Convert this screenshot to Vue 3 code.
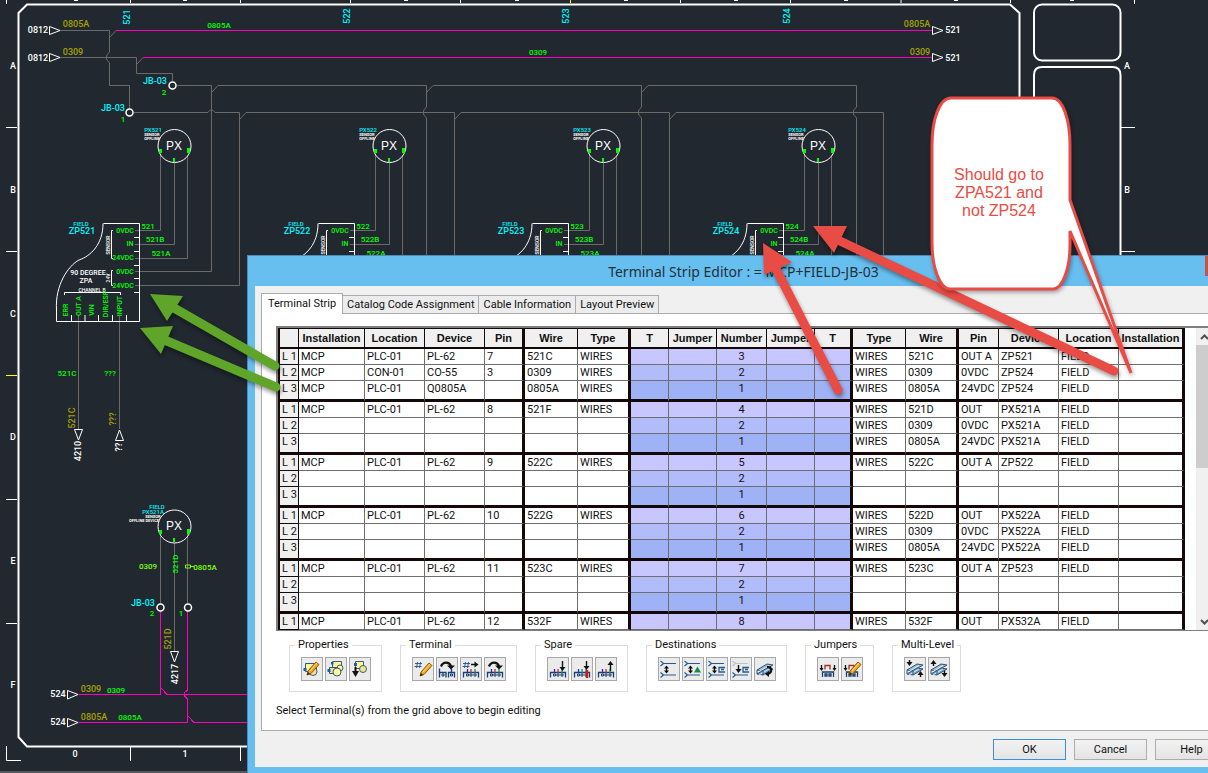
<script setup>
import { ref } from 'vue'

const tabs = ['Terminal Strip', 'Catalog Code Assignment', 'Cable Information', 'Layout Preview']
const activeTab = ref(tabs[0])

const columns = [
  { label: '', width: 19 },
  { label: 'Installation', width: 66 },
  { label: 'Location', width: 60 },
  { label: 'Device', width: 60 },
  { label: 'Pin', width: 40, thick: true },
  { label: 'Wire', width: 53 },
  { label: 'Type', width: 53, thick: true },
  { label: 'T', width: 38, mid: true },
  { label: 'Jumper', width: 48, mid: true },
  { label: 'Number', width: 50, mid: true },
  { label: 'Jumper', width: 48, mid: true },
  { label: 'T', width: 38, mid: true, thick: true },
  { label: 'Type', width: 53 },
  { label: 'Wire', width: 53, thick: true },
  { label: 'Pin', width: 40 },
  { label: 'Device', width: 60 },
  { label: 'Location', width: 60 },
  { label: 'Installation', width: 66, thick: true },
]

const none = ['', '', '', '', '', '']
const row = (level, left, number, right) => ({
  level,
  cells: ['L ' + level, ...left, '', '', number, '', '', ...right],
})
const plc = (pin, wire) => ['MCP', 'PLC-01', 'PL-62', pin, wire, 'WIRES']
const dest = (wire, pin, device) => ['WIRES', wire, pin, device, 'FIELD', '']

const rows = [
  row(1, plc('7', '521C'), '3', dest('521C', 'OUT A', 'ZP521')),
  row(2, ['MCP', 'CON-01', 'CO-55', '3', '0309', 'WIRES'], '2', dest('0309', '0VDC', 'ZP524')),
  row(3, ['MCP', 'PLC-01', 'Q0805A', '', '0805A', 'WIRES'], '1', dest('0805A', '24VDC', 'ZP524')),
  row(1, plc('8', '521F'), '4', dest('521D', 'OUT', 'PX521A')),
  row(2, none, '2', dest('0309', '0VDC', 'PX521A')),
  row(3, none, '1', dest('0805A', '24VDC', 'PX521A')),
  row(1, plc('9', '522C'), '5', dest('522C', 'OUT A', 'ZP522')),
  row(2, none, '2', none),
  row(3, none, '1', none),
  row(1, plc('10', '522G'), '6', dest('522D', 'OUT', 'PX522A')),
  row(2, none, '2', dest('0309', '0VDC', 'PX522A')),
  row(3, none, '1', dest('0805A', '24VDC', 'PX522A')),
  row(1, plc('11', '523C'), '7', dest('523C', 'OUT A', 'ZP523')),
  row(2, none, '2', none),
  row(3, none, '1', none),
  row(1, plc('12', '532F'), '8', dest('532F', 'OUT', 'PX532A')),
]

const NAVY = '#17406d'
const s = (d, stroke = NAVY, width = 1) => ({ d, stroke, width, fill: 'none' })
const f = (d, fill, stroke = 'none') => ({ d, stroke, width: 1, fill })
const circle = (x, y, r) => `M${x - r},${y}a${r},${r} 0 1 0 ${2 * r},0a${r},${r} 0 1 0 ${-2 * r},0z`
const pencil = (x, y) => [
  f(`M${x},${y}l1,-4 8,-9 3,2.500 -8,9z`, '#f5a623', '#8a5a10'),
  s(`M${x + 3},${y - 4}l7,-8`, '#ffe27a', 1),
  f(`M${x},${y}l1,-3 2,2z`, '#222'),
]
const hash = () => [s('M5.500,5l-1,6M8.500,5l-1,6M3,6.500h7M2.500,9.500h7', '#35618f')]
const comb = (middle) => [
  s('M3.500,20.500v-5h15v5', NAVY, 1.3),
  s('M7.500,12v4', '#1030d0', 1.3),
  s('M11,12v4', middle, 1.3),
  s('M15,12v4', '#1c8a5a', 1.3),
  s('M6.500,17h2v2h-2zM10,17h2v2h-2zM14,17h2v2h-2z'),
]
const RED = '#e02020'
const GREEN = '#1c8a5a'
const splitComb = () => [
  s('M3.500,20.500v-5h6.500v5M12.500,20.500v-5h6v5', NAVY, 1.3),
  s('M3.500,11.500v4', '#1030d0', 1.3),
  s('M15.500,12v4', '#1030d0', 1.3),
  s('M6,17h2v2h-2zM14.500,17h2v2h-2z'),
]
const curve = () => [s('M5,9.500C7,4.500 13,4.500 15,9', '#111', 2.2), f('M11,8.500h8l-4,4z', '#111')]
const down = (x, y1, y2) => [s(`M${x},${y1}V${y2 - 2}`, '#111', 1.4), f(`M${x - 3},${y2 - 4}h6l-3,4z`, '#111')]
const up = (x, y1, y2) => [s(`M${x},${y1 + 2}V${y2}`, '#111', 1.4), f(`M${x - 3},${y1 + 4}h6l-3,-4z`, '#111')]
const fork = (y, color = '#235a94') => [s(`M2.500,${y - 2.5}l3,2.500h12.500M2.500,${y + 2.5}l3,-2.500`, color, 1.2)]
const updown = () => [s('M8.500,10v5', '#111', 1.4), f('M6,11.500h5l-2.500,-3zM6,13.500h5l-2.500,3z', '#111')]
const plug = () => [s('M19,10.500h-6v4.500h6M15,12.500h3', '#235a94', 1.3)]
const rail = () => [
  f('M3,13l10,-6 6,1 -10,6z', '#9dbbd6', '#2d5578'),
  f('M3,17l10,-6 6,1 -10,6z', '#7fa3c4', '#2d5578'),
  s('M5,14.500l10,-6M5,18l10,-6', '#dce9f4'),
  s('M9,14v4M3,13v4', '#2d5578'),
]
const jumper = () => [s('M8,12.500v-4h5v4', '#b02a2a', 1.3)]
const block = () => [s('M5.500,20v-5h11v5M8,17h2v2h-2zM12,17h2v2h-2z', NAVY, 1.3)]

const groups = [
  {
    name: 'Properties',
    tools: [
      { name: 'Edit Properties', shapes: [f('M4.500,6.500h11v8h-11z', '#fff3a0', '#235a94'), f(circle(12, 14.5, 4), '#ece39a', '#3b6170'), f('M2.500,11h3v3h-3z', '#1c5fa8'), ...pencil(6, 18)] },
      { name: 'Copy Properties', shapes: [f('M7.500,4.500h9v6h-9z', '#fff3a0', '#3b6170'), f(circle(15, 11, 3), '#fff3a0', '#3b6170'), f('M4.500,10.500h8v6h-8z', '#ece39a', '#235a94'), f(circle(12, 15, 4), '#fff3a0', '#3b6170'), f('M2.500,12h3v3h-3zM6,5h2.500v2.500h-2.500z', '#1c5fa8')] },
      { name: 'Paste Properties', shapes: [f('M6.500,4.500h8v7h-8z', '#fff3a0', '#3b6170'), f(circle(14, 12, 3.5), '#ece39a', '#3b6170'), f('M5,6h3v3h-3z', '#1c5fa8'), s('M6.500,10v6', '#111', 2), f('M3,14h7l-3.500,6z', '#111')] },
    ],
  },
  {
    name: 'Terminal',
    tools: [
      { name: 'Edit Terminal', shapes: [...hash(), ...pencil(8, 19)] },
      { name: 'Reassign Terminal', shapes: [...curve(), ...splitComb()] },
      { name: 'Renumber Terminal', shapes: [...hash(), s('M11,7.500h5', '#111', 1.5), f('M14.500,4.500v6l4,-3z', '#111'), ...comb(RED)] },
      { name: 'Move Terminal', shapes: [...curve(), ...comb(RED)] },
    ],
  },
  {
    name: 'Spare',
    tools: [
      { name: 'Insert Spare Terminal', shapes: [...comb(RED), ...down(15.5, 4, 14)] },
      { name: 'Insert Accessory', shapes: [...comb(GREEN), ...down(15.5, 4, 13), s('M16,13v8', '#e81010', 2.4)] },
      { name: 'Delete Spare', shapes: [...comb(RED), ...up(15.5, 4, 14)] },
    ],
  },
  {
    name: 'Destinations',
    tools: [
      { name: 'Toggle Location', shapes: [...fork(6.5), ...fork(18), ...updown()] },
      { name: 'Toggle Installation', shapes: [...fork(6.5), ...fork(18), ...updown(), f('M12,15.500h7l-3.500,-6z', '#168a4c')] },
      { name: 'Switch Destination', shapes: [...fork(6.5), ...fork(18), ...updown(), ...plug()] },
      { name: 'Move Destination', shapes: [...fork(6.5, '#b9c4cc'), ...fork(18), ...down(8.5, 8, 16), ...plug()] },
      { name: 'Rotate Destination', shapes: [...rail(), s('M13,10c5,-1 6,5 1,7', '#111', 2), f('M15,14v6l-4,-3z', '#111')] },
    ],
  },
  {
    name: 'Jumpers',
    tools: [
      { name: 'Add Jumper', shapes: [...jumper(), s('M4.500,8v5M17.500,8v5', '#111', 1.3), f('M2.500,11h4l-2,3zM15.500,11h4l-2,3z', '#111'), ...block()] },
      { name: 'Edit Jumper', shapes: [...jumper(), s('M4.500,8v4', '#111', 1.3), f('M2.500,11h4l-2,3z', '#111'), ...block(), ...pencil(8, 18)] },
    ],
  },
  {
    name: 'Multi-Level',
    tools: [
      { name: 'Associate Terminals', shapes: [...rail(), ...down(5.5, 3, 9), ...up(16.5, 14, 20)] },
      { name: 'Break Apart', shapes: [...rail(), ...up(5.5, 3, 9), ...down(16.5, 14, 20)] },
    ],
  },
]

const sensors = [
  { x: 174, no: '521' },
  { x: 389, no: '522' },
  { x: 603, no: '523' },
  { x: 818, no: '524' },
]

const t = (text, x, y, cls, size = 9) => ({ text, x, y, cls, size })
const labels = [
  t('0812', 38, 30, 'white'), t('0812', 38, 58, 'white'),
  t('0805A', 76, 24, 'olive'), t('0309', 73, 52, 'olive'),
  t('0805A', 219, 25, 'green', 8), t('0309', 538, 52, 'green', 8),
  t('0805A', 917, 24, 'olive'), t('0309', 920, 52, 'olive'),
  t('521', 953, 30, 'white'), t('521', 953, 58, 'white'),
  t('JB-03', 155, 81, 'cyan'), t('2', 164, 92, 'green', 8),
  t('JB-03', 113, 108, 'cyan'), t('1', 123, 119, 'green', 8),
  t('90 DEGREE', 88, 273, 'white', 7), t('ZPA', 86, 281, 'white', 7), t('CHANNEL B', 92, 290, 'white', 5),
  t('0VDC', 125, 272, 'green', 7), t('24VDC', 123, 286, 'green', 7),
  t('521C', 67, 373, 'green', 8), t('???', 110, 373, 'green', 8),
  t('FIELD', 157, 506, 'cyan', 6), t('PX521A', 153, 511, 'cyan', 6),
  t('0309', 148, 566, 'lime', 8), t('0805A', 205, 567, 'lime', 8),
  t('JB-03', 143, 603, 'cyan'), t('2', 152, 613, 'green', 8), t('1', 181, 613, 'green', 8),
  t('524', 58, 694, 'white'), t('524', 58, 722, 'white'),
  t('0309', 91, 689, 'olive'), t('0309', 116, 690, 'green', 8),
  t('0805A', 94, 717, 'olive'), t('0805A', 130, 717, 'green', 8),
  t('A', 13, 66, 'white'), t('B', 13, 190, 'white'), t('C', 13, 314, 'white'),
  t('D', 13, 437, 'white'), t('E', 13, 561, 'white'), t('F', 13, 685, 'white'),
  t('0', 75, 754, 'white'), t('1', 185, 754, 'white'),
  t('A', 1127, 66, 'white'), t('B', 1127, 190, 'white'),
]
const uprights = [
  t('521', 127, 17, 'cyan'), t('522', 347, 16, 'cyan'), t('523', 566, 16, 'cyan'), t('524', 787, 16, 'cyan'),
  t('ERR', 66, 310, 'green', 7), t('OUT A', 79, 306, 'green', 7), t('VIN', 92, 310, 'green', 7),
  t('DIR/ESP', 106, 304, 'green', 7), t('INPUT', 120, 306, 'green', 7),
  t('24V', 108, 278, 'white', 5),
  t('521C', 72, 418, 'olive'), t('???', 113, 419, 'olive'),
  t('4210', 78, 451, 'white'), t('??', 119, 447, 'white'),
  t('521D', 175, 564, 'green', 8), t('521D', 168, 639, 'olive'), t('4217', 175, 674, 'white'),
]
const topMarks = [74, 183, 404, 515, 624, 734, 844, 954, 1070]
</script>

<template>
  <main class="desktop">
    <svg class="drawing" width="1208" height="773" viewBox="0 0 1208 773" aria-label="Wiring schematic">
      <g class="frame">
        <path d="M1019.500 256V13L1010 4.500H27L18.500 13V737L27 746.500H260" />
        <rect x="1034" y="4.500" width="86.500" height="56" rx="8" />
        <path d="M1034 256V75q0-8 8-8H1112.500q8 0 8 8V256" />
      </g>
      <path class="tick" d="M6.500 0V4M130.500 0V3M240.500 0V3M350.500 0V3M460.500 0V3M680.500 0V3M790.500 0V3M901 0V3M1010.500 0V3M1134.500 0V4M6 127.500H17M6 251.500H17M6 499.500H17M6 623.500H17M130.500 747V761M240.500 747V761M6.500 746V760.500H21M1121 127.500H1135M1121 251.500H1135" />
      <path class="tick yellow" d="M570.500 0V3M6 375.500H17" />
      <rect v-for="x in topMarks" :key="x" :x="x" y="0" width="4" height="1" fill="#fff" />

      <path class="wire" d="M60 30.500H109.500V52Q103 57.500 109.500 63V85.500H129.500V108M110 37L116 30.500M60 57.500H136.500V73.500H172.500V81M137 64L143 57.500M177 85.500H211.500V271.500H135M212 92L218 85.500H426.500V107Q420 112.500 426.500 118V256M427 92L433 85.500H641.500V107Q635 112.500 641.500 118V256M642 92L648 85.500H856.500V107Q850 112.500 856.500 118V256M134 112.500H208Q211.500 107 215 112.500H239.500V285.500H135M240 119L246 112.500H454.500V256M455 119L461 112.500H669.500V256M670 119L676 112.500H883.500V256" />
      <path class="wire" d="M78.500 315V429M119.500 315V429M160.500 532V603M174.500 543V652M187.500 532V603" />
      <path class="feed" d="M116 30.500H932" />
      <path class="feed" d="M143 57.500H932" />
      <path class="feed" d="M78 694.500H160.500V611M161 688L167 694.500H248" />
      <path class="feed" d="M78 722.500H187.500V699Q181 694.500 187.500 690V611M188 716L194 722.500H248" />

      <g v-for="p in sensors" :key="p.no" :transform="`translate(${p.x - 174} 0)`">
        <path class="wire" d="M160.500 155V230.500H135M174.500 163V244.500H135M187.500 155V258.500H135" />
        <circle class="part" cx="174.500" cy="146" r="16.500" />
        <text class="plain" x="174" y="146" font-size="12">PX</text>
        <path class="pin" d="M159 149h3v4h-3zM173 158h2v4h-2zM187 148h3v5h-3z" />
        <text class="cyan" x="153" y="129" font-size="6">PX{{ p.no }}</text>
        <text class="tiny" x="152" y="134">SENSOR</text>
        <text class="tiny" x="152" y="138">OFFLINE</text>
        <path class="part" d="M103.500 223.500H139.500V321.500H56.500V310C55 285 68 266 79 260C91 256 103 244 103 223.500M134 237.500H139M134 251.500H139M134 265.500H139M134 278.500H139M134 292.500H139M113 230.500H111.500V258.500H113" />
        <text class="cyan" x="81" y="223" font-size="6">FIELD</text>
        <text class="cyan" x="82" y="231" font-size="9">ZP{{ p.no }}</text>
        <text class="green" x="125" y="231" font-size="7">0VDC</text>
        <text class="green" x="130" y="244" font-size="7">IN</text>
        <text class="green" x="123" y="258" font-size="7">24VDC</text>
        <text class="green" x="148" y="226" font-size="8">{{ p.no }}</text>
        <text class="green" x="155" y="239" font-size="8">{{ p.no }}B</text>
        <text class="green" x="161" y="253" font-size="8">{{ p.no }}A</text>
        <text class="white" transform="translate(108 245) rotate(-90)" font-size="5">SENSOR</text>
      </g>

      <circle class="part" cx="174.500" cy="526.500" r="16.500" />
      <text class="plain" x="174" y="526" font-size="12">PX</text>
      <path class="pin" d="M159 530h3v4h-3zM173 538h2v4h-2zM187 529h3v5h-3z" />
      <text class="tiny" x="153" y="516">SENSOR</text>
      <text class="tiny" x="144" y="520">OFFLINE DEVICE</text>
      <path class="part" d="M113 270.500H111.500V285.500H113M64.500 295V292.500H120.500V295M71.500 315V321M85 315V321M98.500 315V321M112.500 315V321M126.500 315V321" />
      <path class="part" d="M49.500 26.500V34.500L60 30.500zM49.500 53.500V61.500L60 57.500zM932.500 26.500V34.500L943 30.500zM932.500 53.500V61.500L943 57.500zM67.500 690.500V699L78 694.500zM67.500 718.500V727L78 722.500zM74.500 429.500H82.500L78.500 440zM115.500 440.500H123.500L119.500 430zM170.500 651.500H178.500L174.500 662z" />
      <g class="node">
        <circle cx="172.500" cy="85.500" r="3.500" />
        <circle cx="129.500" cy="112.500" r="3.500" />
        <circle cx="160.500" cy="607.500" r="3.500" />
        <circle cx="188" cy="607.500" r="3.500" />
      </g>
      <path class="tag" d="M185.500 565h5v3h-5zM190 566.500H194" />
      <text v-for="(l, i) in labels" :key="i" :class="l.cls" :x="l.x" :y="l.y" :font-size="l.size">{{ l.text }}</text>
      <text v-for="(l, i) in uprights" :key="'u' + i" :class="l.cls" :transform="`translate(${l.x} ${l.y}) rotate(-90)`" :font-size="l.size">{{ l.text }}</text>
      <rect x="0" y="771" width="248" height="2" fill="#55575a" />
    </svg>

    <section class="dialog" role="dialog" aria-labelledby="dialog-title">
      <header class="titlebar">
        <h1 id="dialog-title">Terminal Strip Editor : = MCP+FIELD-JB-03</h1>
        <button class="close" type="button" aria-label="Close"></button>
      </header>
      <div class="body">
        <div class="tabs" role="tablist">
          <button v-for="name in tabs" :key="name" type="button" role="tab" class="tab" :class="{ active: name === activeTab }" :aria-selected="name === activeTab" @click="activeTab = name">{{ name }}</button>
        </div>
        <div class="page">
          <div class="grid">
            <div class="viewport">
              <table>
                <colgroup>
                  <col v-for="(c, i) in columns" :key="i" :style="{ width: c.width + 'px' }" />
                </colgroup>
                <thead>
                  <tr>
                    <th v-for="(c, i) in columns" :key="i" scope="col" :class="{ thick: c.thick }">{{ c.label }}</th>
                  </tr>
                </thead>
                <tbody>
                  <tr v-for="(r, ri) in rows" :key="ri" :class="'level-' + r.level">
                    <td v-for="(cell, ci) in r.cells" :key="ci" :class="{ thick: columns[ci].thick, mid: columns[ci].mid, head: ci === 0 }">{{ cell }}</td>
                  </tr>
                </tbody>
              </table>
            </div>
            <div class="scrollbar">
              <button type="button" aria-label="Scroll up"><svg width="9" height="6" viewBox="0 0 9 6"><path d="M1 5L4.500 1.500L8 5" /></svg></button>
              <div class="thumb"></div>
              <button type="button" aria-label="Scroll down"><svg width="9" height="6" viewBox="0 0 9 6"><path d="M1 1L4.500 4.500L8 1" /></svg></button>
            </div>
          </div>
          <div class="groups">
            <fieldset v-for="g in groups" :key="g.name">
              <legend>{{ g.name }}</legend>
              <div class="tools">
                <button v-for="tool in g.tools" :key="tool.name" class="tool" type="button" :aria-label="tool.name">
                  <svg width="20" height="22" viewBox="1 1 20 22">
                    <path v-for="(p, i) in tool.shapes" :key="i" :d="p.d" :fill="p.fill" :stroke="p.stroke" :stroke-width="p.width" />
                  </svg>
                </button>
              </div>
            </fieldset>
          </div>
          <p class="hint">Select Terminal(s) from the grid above to begin editing</p>
        </div>
        <footer class="actions">
          <button type="button" class="primary">OK</button>
          <button type="button">Cancel</button>
          <button type="button">Help</button>
        </footer>
      </div>
    </section>

    <svg class="notes" width="1208" height="773" viewBox="0 0 1208 773">
      <g class="arrow go">
        <path class="shaft" d="M174 308L275 366M167 341L276 387" />
        <path class="tip" d="M150 294L183 296L167 321zM140 328L173 326L161 354z" />
      </g>
      <g class="arrow stop">
        <path class="shaft" d="M840 241L1114 371M775 267L838 390" />
        <path class="tip" d="M813 226L847 226L834 253zM763 243L764 275L792 262z" />
      </g>
      <path class="callout" d="M951 98H1052C1063 98 1070 120 1070 145V200L1131 373L1070 231V245C1070 270 1062 289 1053 289H950C940 289 932 268 932 243V145C932 118 940 98 951 98z" />
      <text class="message" x="999" y="180">Should go to</text>
      <text class="message" x="999" y="198">ZPA521 and</text>
      <text class="message" x="999" y="216">not ZP524</text>
    </svg>
  </main>
</template>

<style>
body { margin: 0; overflow: hidden; }
</style>

<style scoped>
.desktop {
  position: relative;
  height: 100vh;
  overflow: hidden;
  background: #212830;
  font-family: Roboto, "Liberation Sans", Arial, sans-serif;
  font-size: 11px;
  color: #111;
}
.drawing, .notes { position: absolute; top: 0; left: 0; }
.notes { pointer-events: none; }
.drawing text {
  font-weight: 500;
  text-anchor: middle;
  dominant-baseline: central;
}
.drawing .plain { fill: #fff; font-family: "Liberation Sans", Arial, sans-serif; font-weight: 400; }
.drawing .tiny { fill: #fff; font-size: 4px; font-weight: 700; }
.white { fill: #fff; }
.cyan { fill: #00f6ff; }
.green { fill: #00ff00; }
.lime { fill: #80ff00; }
.olive { fill: #a8a000; }
.frame { fill: none; stroke: #fff; stroke-width: 2; }
.tick { fill: none; stroke: #fff; stroke-width: 1; }
.tick.yellow { stroke: #ffff00; }
.wire { fill: none; stroke: #6b6a68; }
.feed { fill: none; stroke: #ff00bf; shape-rendering: crispEdges; }
.part { fill: none; stroke: #fff; }
.pin { fill: #00ff00; }
.tag { fill: none; stroke: #80ff00; }
.node { fill: #212830; stroke: #fff; stroke-width: 1.5; }

.dialog {
  position: absolute;
  top: 255px;
  left: 247px;
  right: -32px;
  box-sizing: border-box;
  padding: 0 7px 7px;
  border: 1px solid #4a8db8;
  background: #67bff0;
}
.titlebar { display: flex; align-items: center; justify-content: center; height: 30px; }
.titlebar h1 {
  margin: 0;
  font: 400 14px "Noto Sans", "Open Sans", sans-serif;
  color: #23303a;
}
.close {
  position: absolute;
  top: 0;
  right: 6px;
  width: 28px;
  height: 20px;
  padding: 0;
  border: 0;
  background: #c75050;
}
.body { padding: 7px 4px 7px 6px; background: #f0f0f0; }
.tabs { display: flex; align-items: flex-end; height: 20px; }
.tab {
  height: 18px;
  padding: 0 4px;
  border: 1px solid #acacac;
  border-left-width: 0;
  border-bottom: 0;
  background: #ececec;
  font: inherit;
  color: inherit;
}
.tab.active {
  position: relative;
  height: 21px;
  margin-bottom: -1px;
  padding: 0 6px 2px;
  border-left-width: 1px;
  background: #fff;
}
.page { padding: 12px 13px 12px 14px; border: 1px solid #acacac; background: #fff; }
.grid {
  display: flex;
  justify-content: space-between;
  height: 302px;
  border: solid #808080;
  border-width: 2px 1px 1px 2px;
}
.viewport { overflow: hidden; border: solid #140808; border-width: 1px 0 0 2px; }
table { width: 905px; border-collapse: separate; border-spacing: 0; table-layout: fixed; }
th, td {
  box-sizing: border-box;
  height: 16px;
  padding: 0 0 0 2px;
  overflow: hidden;
  border: solid #6e6e6e;
  border-width: 0 1px 1px 0;
  line-height: 15px;
  vertical-align: top;
  text-align: left;
  white-space: nowrap;
}
th {
  height: 20px;
  padding: 0;
  border-color: #140808;
  border-bottom-width: 2px;
  background: #f0f0f0;
  font-family: "Liberation Sans", Arial, sans-serif;
  line-height: 18px;
  text-align: center;
}
.level-3 td { height: 21px; border-bottom: 3px solid #140808; }
td.head { border-right-color: #140808; border-bottom-color: #140808; background: #f0f0f0; }
td.mid { padding: 0; text-align: center; }
.level-1 .mid { background: #c8c6ff; }
.level-2 .mid { background: #b2bcfb; }
.level-3 .mid { background: #9fb2f5; }
th.thick, td.thick { border-right: 3px solid #140808; }
.scrollbar { display: flex; flex-direction: column; width: 17px; background: #f0f0f0; }
.scrollbar button { height: 17px; padding: 0; border: 0; background: none; line-height: 0; }
.scrollbar path { fill: none; stroke: #505050; stroke-width: 2; }
.thumb { height: 123px; margin-bottom: auto; background: #cdcdcd; }
.groups { display: flex; gap: 18px; margin: 7px 0 0 13px; }
fieldset { min-width: 0; margin: 0; padding: 5px 10px 10px 11px; border: 1px solid #dcdcdc; }
legend { margin: 0 -10px 0 -6px; padding: 0 3px; line-height: 14px; }
.tools { display: flex; gap: 2px; }
.tool { width: 22px; height: 24px; padding: 0; border: 1px solid #a8a8a8; background: #ebebeb; line-height: 0; }
.hint { margin: 12px 0 0; line-height: 14px; }
.actions { display: flex; justify-content: flex-end; gap: 8px; padding-top: 8px; }
.actions button {
  width: 73px;
  height: 21px;
  padding: 0;
  border: 1px solid #acacac;
  background: linear-gradient(#f2f2f2, #e4e4e4);
  font: inherit;
  color: inherit;
}
.actions .primary { border-color: #3b8ee0; }

.arrow { filter: drop-shadow(1px 3px 2px rgba(0, 0, 0, 0.4)); }
.shaft { fill: none; stroke-width: 9; stroke-linecap: round; }
.go { fill: #5fa529; stroke: #5fa529; }
.stop { fill: #e84c44; stroke: #e84c44; }
.tip { stroke: none; }
.callout {
  fill: #fff;
  stroke: #e84c44;
  stroke-width: 3;
  filter: drop-shadow(1px 2px 2px rgba(0, 0, 0, 0.35));
}
.message { fill: #e84c44; font-family: "Liberation Sans", Arial, sans-serif; font-size: 16px; text-anchor: middle; }
</style>
